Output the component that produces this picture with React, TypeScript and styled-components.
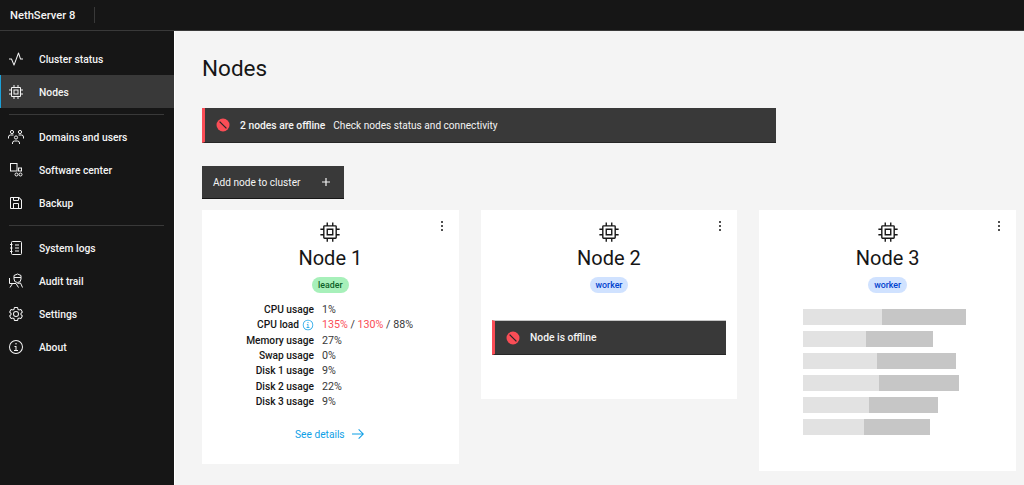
import styled, { createGlobalStyle } from "styled-components"

const GlobalStyle = createGlobalStyle`
  html, body {
    margin: 0;
    padding: 0;
    height: 485px;
    overflow: hidden;
    background: #f4f4f4;
    font-family: Roboto, "Noto Sans", "Liberation Sans", sans-serif;
  }
  * {
    box-sizing: border-box;
  }
`

const ChipIcon = ({ size = 16 }: { size?: number }) => (
  <svg width={size} height={size} viewBox="0 0 32 32" fill="currentColor">
    <path d="M11,11V21H21V11Zm8,8H13V13h6Z" />
    <path d="M30,13V11H26V8a2,2,0,0,0-2-2H21V2H19V6H13V2H11V6H8A2,2,0,0,0,6,8v3H2v2H6v6H2v2H6v3a2,2,0,0,0,2,2h3v4h2V26h6v4h2V26h3a2,2,0,0,0,2-2V21h4V19H26V13ZM24,24H8V8H24Z" />
  </svg>
)

const ActivityIcon = () => (
  <svg width={16} height={16} viewBox="0 0 32 32" fill="currentColor">
    <path d="M12,29a1,1,0,0,1-.92-.62L6.33,17H2V15H7a1,1,0,0,1,.92.62L12,25.28,20.06,3.65A1,1,0,0,1,21,3a1,1,0,0,1,.93.68L25.72,15H30v2H25a1,1,0,0,1-.95-.68L21,7,12.94,28.35A1,1,0,0,1,12,29Z" />
  </svg>
)

const EventsIcon = () => (
  <svg width={16} height={16} viewBox="0 0 32 32" fill="none" stroke="currentColor" strokeWidth="2">
    <circle cx="16" cy="17" r="3.2" />
    <path d="M9 30v-2a4 4 0 0 1 4-4h6a4 4 0 0 1 4 4v2" />
    <circle cx="8" cy="6" r="3.2" />
    <circle cx="24" cy="6" r="3.2" />
    <path d="M1 19v-3a4 4 0 0 1 4-4h6" />
    <path d="M31 19v-3a4 4 0 0 0-4-4h-6" />
  </svg>
)

const SoftwareIcon = () => (
  <svg width={16} height={16} viewBox="0 0 32 32" fill="none" stroke="currentColor" strokeWidth="2">
    <rect x="5" y="3" width="13" height="15" />
    <rect x="21" y="12" width="6" height="6" />
    <circle cx="17" cy="25" r="3" />
    <circle cx="25" cy="25" r="3" />
  </svg>
)

const SaveIcon = () => (
  <svg width={16} height={16} viewBox="0 0 32 32" fill="currentColor">
    <path d="M27.71,9.29l-5-5A1,1,0,0,0,22,4H6A2,2,0,0,0,4,6V26a2,2,0,0,0,2,2H26a2,2,0,0,0,2-2V10A1,1,0,0,0,27.71,9.29ZM12,6h8v4H12Zm8,20H12V18h8Zm2,0V18a2,2,0,0,0-2-2H12a2,2,0,0,0-2,2v8H6V6h4v4a2,2,0,0,0,2,2h8a2,2,0,0,0,2-2V6.41l4,4V26Z" />
  </svg>
)

const LogIcon = () => (
  <svg width={16} height={16} viewBox="0 0 32 32" fill="none" stroke="currentColor" strokeWidth="2">
    <rect x="7" y="3" width="20" height="26" rx="2" />
    <path d="M14 10h8M14 16h8M14 22h8M4 9h5M4 16h5M4 23h5" />
  </svg>
)

const AuditIcon = () => (
  <svg width={16} height={16} viewBox="0 0 32 32" fill="none" stroke="currentColor" strokeWidth="2">
    <path d="M12 5l7-3 7 3v7a7 7 0 0 1-14 0z" />
    <path d="M12 9h14" />
    <path d="M3 10v11h13l5 8M4 29l5-8M19 21l6-1 4 9" />
  </svg>
)

const SettingsIcon = () => (
  <svg width={16} height={16} viewBox="0 0 32 32" fill="currentColor">
    <path d="M27,16.76c0-.25,0-.5,0-.76s0-.51,0-.77l1.92-1.68A2,2,0,0,0,29.3,11L26.94,7a2,2,0,0,0-1.73-1,2,2,0,0,0-.64.1l-2.43.82a11.35,11.35,0,0,0-1.31-.75l-.51-2.52a2,2,0,0,0-2-1.61H13.64a2,2,0,0,0-2,1.61l-.51,2.52a11.48,11.48,0,0,0-1.32.75L7.43,6.06A2,2,0,0,0,6.79,6,2,2,0,0,0,5.06,7L2.7,11a2,2,0,0,0,.41,2.51L5,15.24c0,.25,0,.5,0,.76s0,.51,0,.77L3.11,18.45A2,2,0,0,0,2.7,21L5.06,25a2,2,0,0,0,1.73,1,2,2,0,0,0,.64-.1l2.43-.82a11.35,11.35,0,0,0,1.31.75l.51,2.52a2,2,0,0,0,2,1.61h4.72a2,2,0,0,0,2-1.61l.51-2.52a11.48,11.48,0,0,0,1.32-.75l2.42.82a2,2,0,0,0,.64.1,2,2,0,0,0,1.73-1L29.3,21a2,2,0,0,0-.41-2.51ZM25.21,24l-3.43-1.16a8.86,8.86,0,0,1-2.71,1.57L18.36,28H13.64l-.71-3.55a9.36,9.36,0,0,1-2.7-1.57L6.79,24,4.43,20l2.72-2.4a8.9,8.9,0,0,1,0-3.13L4.43,12,6.79,8l3.43,1.16a8.86,8.86,0,0,1,2.71-1.57L13.64,4h4.72l.71,3.55a9.36,9.36,0,0,1,2.7,1.57L25.21,8,27.57,12l-2.72,2.4a8.9,8.9,0,0,1,0,3.13L27.57,20Z" />
    <path d="M16,22a6,6,0,1,1,6-6A5.94,5.94,0,0,1,16,22Zm0-10a3.91,3.91,0,0,0-4,4,3.91,3.91,0,0,0,4,4,3.91,3.91,0,0,0,4-4A3.91,3.91,0,0,0,16,12Z" />
  </svg>
)

const InfoIcon = ({ size = 16 }: { size?: number }) => (
  <svg width={size} height={size} viewBox="0 0 32 32" fill="currentColor">
    <path d="M17 22v-8h-4v2h2v6h-3v2h8v-2h-3z" />
    <path d="M16 8a1.5 1.5 0 1 0 1.5 1.5A1.5 1.5 0 0 0 16 8z" />
    <path d="M16 30a14 14 0 1 1 14-14 14 14 0 0 1-14 14zm0-26a12 12 0 1 0 12 12A12 12 0 0 0 16 4z" />
  </svg>
)

const ErrorIcon = () => (
  <svg width={14} height={14} viewBox="0 0 14 14">
    <circle cx="7" cy="7" r="6.5" fill="#fa4d56" />
    <path d="M3.6 3.6l6.8 6.8" stroke="#262626" strokeWidth="1.3" />
  </svg>
)

const PlusIcon = () => (
  <svg width={10} height={10} viewBox="0 0 10 10" stroke="#f4f4f4" strokeWidth="1.2">
    <path d="M5 1v8M1 5h8" />
  </svg>
)

const ArrowIcon = () => (
  <svg width={16} height={16} viewBox="0 0 32 32" fill="currentColor">
    <path d="M18 6l-1.43 1.39L24.15 15H4v2h20.15l-7.58 7.57L18 26l10-10L18 6z" />
  </svg>
)

const KebabIcon = () => (
  <svg width={12} height={12} viewBox="0 0 12 12" fill="#161616">
    <circle cx="6" cy="2" r="1" />
    <circle cx="6" cy="6" r="1" />
    <circle cx="6" cy="10" r="1" />
  </svg>
)

const navGroups = [
  [
    { label: "Cluster status", icon: <ActivityIcon /> },
    { label: "Nodes", icon: <ChipIcon />, active: true }
  ],
  [
    { label: "Domains and users", icon: <EventsIcon /> },
    { label: "Software center", icon: <SoftwareIcon /> },
    { label: "Backup", icon: <SaveIcon /> }
  ],
  [
    { label: "System logs", icon: <LogIcon /> },
    { label: "Audit trail", icon: <AuditIcon /> },
    { label: "Settings", icon: <SettingsIcon /> },
    { label: "About", icon: <InfoIcon /> }
  ]
]

const usageRows = [
  { label: "Memory usage", value: "27%" },
  { label: "Swap usage", value: "0%" },
  { label: "Disk 1 usage", value: "9%" },
  { label: "Disk 2 usage", value: "22%" },
  { label: "Disk 3 usage", value: "9%" }
]

const skeletonRows = [
  [79, 84],
  [63, 67],
  [74, 79],
  [76, 80],
  [66, 69],
  [61, 66]
]

const Sidebar = () => (
  <SideNav>
    {navGroups.map((group, i) => (
      <NavGroup key={i}>
        {group.map((item) => (
          <NavItem key={item.label} $active={item.active}>
            <NavIcon>{item.icon}</NavIcon>
            <NavLabel>{item.label}</NavLabel>
          </NavItem>
        ))}
      </NavGroup>
    ))}
  </SideNav>
)

const Usage = () => (
  <UsageTable>
    <UsageLabel>CPU usage</UsageLabel>
    <UsageValue>1%</UsageValue>
    <UsageLabel>
      CPU load
      <InfoTip>
        <InfoIcon size={12} />
      </InfoTip>
    </UsageLabel>
    <UsageValue>
      <Hot>135%</Hot> / <Hot>130%</Hot> / 88%
    </UsageValue>
    {usageRows.map((row) => (
      <UsageCell key={row.label}>
        <UsageLabel>{row.label}</UsageLabel>
        <UsageValue>{row.value}</UsageValue>
      </UsageCell>
    ))}
  </UsageTable>
)

const NodeHead = ({ name, role }: { name: string; role: "leader" | "worker" }) => (
  <>
    <Kebab>
      <KebabIcon />
    </Kebab>
    <CardIcon>
      <ChipIcon size={22} />
    </CardIcon>
    <NodeName>{name}</NodeName>
    <Tag $role={role}>{role}</Tag>
  </>
)

export default function App() {
  return (
    <>
      <GlobalStyle />
      <Header>
        <Brand>NethServer 8</Brand>
        <HeaderDivider />
      </Header>
      <Body>
        <Sidebar />
        <Main>
          <PageTitle>Nodes</PageTitle>
          <Notification>
            <ErrorIcon />
            <NotificationTitle>2 nodes are offline</NotificationTitle>
            <NotificationText>Check nodes status and connectivity</NotificationText>
          </Notification>
          <AddButton>
            Add node to cluster
            <PlusIcon />
          </AddButton>
          <Cards>
            <Card $height={254}>
              <NodeHead name="Node 1" role="leader" />
              <Usage />
              <SeeDetails>
                See details
                <ArrowIcon />
              </SeeDetails>
            </Card>
            <Card $height={189}>
              <NodeHead name="Node 2" role="worker" />
              <CardNotification>
                <ErrorIcon />
                <NotificationTitle>Node is offline</NotificationTitle>
              </CardNotification>
            </Card>
            <Card $height={261}>
              <NodeHead name="Node 3" role="worker" />
              <Skeleton>
                {skeletonRows.map(([light, dark], i) => (
                  <SkeletonRow key={i}>
                    <SkeletonLight style={{ width: light }} />
                    <SkeletonDark style={{ width: dark }} />
                  </SkeletonRow>
                ))}
              </Skeleton>
            </Card>
          </Cards>
        </Main>
      </Body>
    </>
  )
}

const Header = styled.header`
  display: flex;
  align-items: center;
  height: 31px;
  background: #161616;
  border-bottom: 1px solid #393939;
`

const Brand = styled.div`
  width: 94px;
  padding-left: 10px;
  font-size: 11.2px;
  font-weight: 500;
  color: #f4f4f4;
`

const HeaderDivider = styled.div`
  width: 1px;
  height: 16px;
  background: #393939;
`

const Body = styled.div`
  display: flex;
  height: 454px;
`

const SideNav = styled.nav`
  flex: 0 0 175px;
  padding-top: 11px;
  background: #161616;
  border-right: 1px solid #ffffff;
`

const NavGroup = styled.div`
  & + & {
    position: relative;
    margin-top: 6px;
    padding-top: 6px;
  }
  & + &::before {
    content: "";
    position: absolute;
    top: 0;
    left: 9px;
    right: 10px;
    height: 1px;
    background: #393939;
  }
`

const NavItem = styled.div<{ $active?: boolean }>`
  display: flex;
  align-items: center;
  height: 33px;
  color: #f4f4f4;
  background: ${(props) => (props.$active ? "#393939" : "transparent")};
  box-shadow: ${(props) => (props.$active ? "inset 1px 0 0 #1ba1d9" : "none")};
`

const NavIcon = styled.span`
  display: flex;
  width: 39px;
  padding-left: 8px;
`

const NavLabel = styled.span`
  padding-top: 2px;
  font-size: 10.3px;
  font-weight: 500;
`

const Main = styled.main`
  flex: 1;
  padding: 0 8px 0 27px;
  background: #f4f4f4;
`

const PageTitle = styled.h1`
  margin: 21px 0 23px;
  height: 33px;
  font-size: 22.5px;
  line-height: 33px;
  font-weight: 400;
  color: #161616;
`

const Notification = styled.div`
  display: flex;
  align-items: center;
  width: 574px;
  height: 35px;
  padding-left: 11px;
  background: #393939;
  border-left: 3px solid #fa4d56;
  border-bottom: 1px solid #262626;
`

const NotificationTitle = styled.span`
  margin-left: 10px;
  font-size: 10.3px;
  font-weight: 500;
  color: #f4f4f4;
`

const NotificationText = styled.span`
  margin-left: 8px;
  font-size: 10.1px;
  color: #f4f4f4;
`

const AddButton = styled.button`
  display: flex;
  align-items: center;
  justify-content: space-between;
  width: 142px;
  height: 33px;
  margin-top: 23px;
  padding: 0 13px 0 11px;
  border: 0;
  border-bottom: 1px solid #161616;
  background: #393939;
  font: inherit;
  font-size: 10.1px;
  color: #f4f4f4;
`

const Cards = styled.div`
  display: grid;
  grid-template-columns: repeat(3, 256.67px);
  column-gap: 22px;
  align-items: start;
  margin-top: 11px;
`

const Card = styled.section<{ $height: number }>`
  position: relative;
  display: flex;
  flex-direction: column;
  align-items: center;
  height: ${(props) => props.$height}px;
  padding-top: 11px;
  background: #ffffff;
`

const Kebab = styled.span`
  position: absolute;
  top: 10px;
  right: 11px;
  display: flex;
`

const CardIcon = styled.span`
  display: flex;
  color: #161616;
`

const NodeName = styled.div`
  margin-top: 2px;
  height: 27px;
  font-size: 20px;
  line-height: 27px;
  color: #161616;
`

const Tag = styled.span<{ $role: "leader" | "worker" }>`
  margin-top: 5px;
  height: 16px;
  padding: 0 6px;
  border-radius: 8px;
  font-size: 8.8px;
  line-height: 16px;
  font-weight: 500;
  color: ${(props) => (props.$role === "leader" ? "#0e6027" : "#0043ce")};
  background: ${(props) => (props.$role === "leader" ? "#a7f0ba" : "#d0e2ff")};
`

const UsageTable = styled.div`
  display: grid;
  grid-template-columns: 112px auto;
  justify-content: start;
  align-self: flex-start;
  column-gap: 8px;
  margin: 9px 0 0 0;
  grid-auto-rows: 15.33px;
  align-items: center;
`

const UsageCell = styled.div`
  display: contents;
`

const UsageLabel = styled.div`
  display: flex;
  align-items: center;
  justify-content: flex-end;
  font-size: 10.2px;
  font-weight: 500;
  color: #161616;
`

const UsageValue = styled.div`
  font-size: 10.7px;
  color: #393939;
`

const InfoTip = styled.span`
  display: flex;
  margin-left: 3px;
  color: #0f9fe6;
`

const Hot = styled.span`
  color: #fa4d56;
`

const SeeDetails = styled.a`
  display: flex;
  align-items: center;
  gap: 5px;
  margin-top: 17px;
  font-size: 10.2px;
  color: #0f9fe6;
`

const CardNotification = styled.div`
  display: flex;
  align-items: center;
  width: 234px;
  height: 35px;
  margin-top: 27px;
  padding-left: 11px;
  background: #393939;
  border-left: 3px solid #fa4d56;
  border-top: 1px solid #c6c6c6;
  border-bottom: 1px solid #262626;
`

const Skeleton = styled.div`
  display: flex;
  flex-direction: column;
  gap: 6px;
  align-self: flex-start;
  margin: 16px 0 0 44px;
`

const SkeletonRow = styled.div`
  display: flex;
  height: 16px;
`

const SkeletonLight = styled.div`
  background: #e2e2e2;
`

const SkeletonDark = styled.div`
  background: #c6c6c6;
`
